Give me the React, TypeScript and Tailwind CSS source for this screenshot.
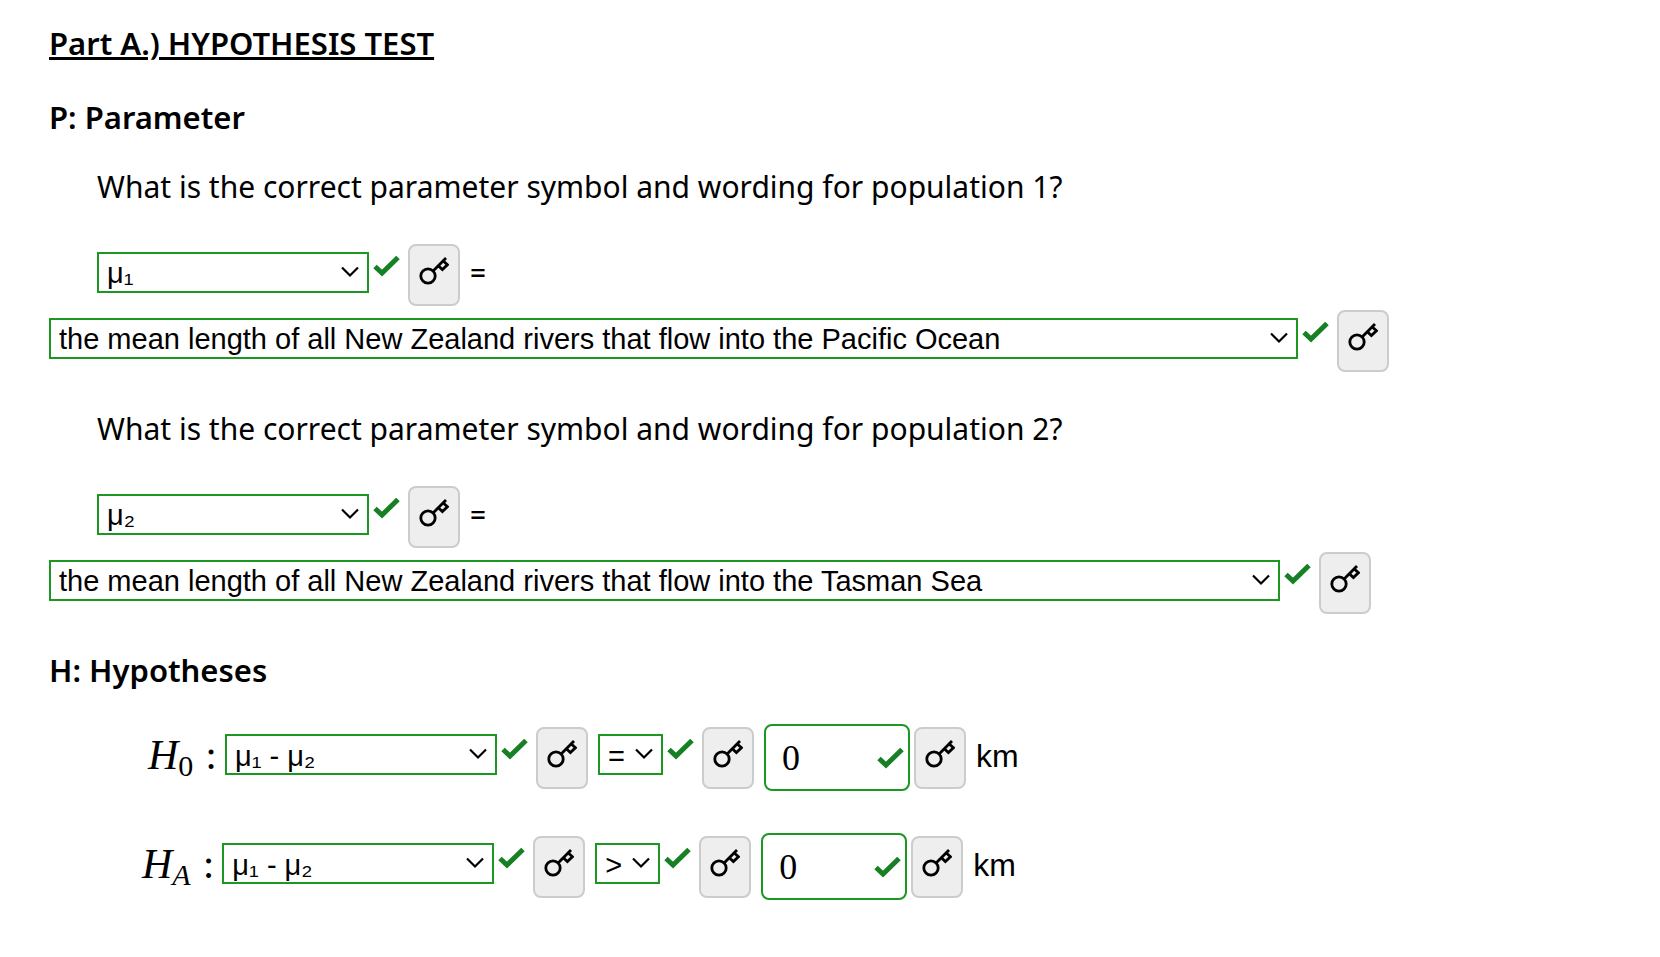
import type { ReactNode } from 'react';

const CheckIcon = ({ className = '' }: { className?: string }) => (
  <svg className={`shrink-0 ${className}`} width="27" height="22" viewBox="0 0 27 22" fill="none" aria-hidden="true">
    <path d="M2 10.5 L9 17 L25 1.5" stroke="#178024" strokeWidth="5" />
  </svg>
);

const KeyButton = () => (
  <button
    type="button"
    aria-label="Show answer"
    className="flex h-[62px] w-[52px] shrink-0 items-center justify-center rounded-lg border-2 border-[#cccccc] bg-[#eeeeee] pb-2"
  >
    <svg width="30" height="30" viewBox="0 0 30 30" fill="none" stroke="#000" strokeWidth="2.8" aria-hidden="true">
      <circle cx="9" cy="20" r="7.2" />
      <path d="M14.1 14.9 L27 2" />
      <path d="M19.3 9.7 L23.4 13.6 L28.4 8.8 L24 4.8" />
    </svg>
  </button>
);

interface SelectProps {
  label: string;
  value: string;
  className?: string;
}

const Select = ({ label, value, className = '' }: SelectProps) => (
  <div className={`relative mb-1.5 ${className}`}>
    <select
      aria-label={label}
      defaultValue={value}
      className="block h-[41px] w-full appearance-none border-2 border-[#1b9722] bg-white pt-0.5 pl-2 font-['Liberation_Sans',sans-serif] text-[29px] leading-8 text-black"
    >
      <option>{value}</option>
    </select>
    <svg
      className="pointer-events-none absolute top-[14px] right-2.5"
      width="18"
      height="12"
      viewBox="0 0 18 12"
      fill="none"
      aria-hidden="true"
    >
      <path d="M1 1.5 L9 9.5 L17 1.5" stroke="#000" strokeWidth="2.2" />
    </svg>
  </div>
);

// Select plus its correct mark and answer key
const Graded = (props: SelectProps) => (
  <>
    <Select {...props} />
    <CheckIcon className="mb-4 ml-1 mr-2" />
    <KeyButton />
  </>
);

interface PopulationProps {
  n: number;
  symbol: string;
  wording: string;
  wordingWidth: string;
}

const Population = ({ n, symbol, wording, wordingWidth }: PopulationProps) => (
  <div>
    <p className="pl-12 text-[30px] leading-[38px]">
      What is the correct parameter symbol and wording for population {n}?
    </p>
    <div className="mt-[38px] flex items-center pl-12">
      <Graded label={`Symbol ${n}`} value={symbol} className="w-[272px]" />
      <span className="mb-1.5 ml-2.5 font-medium">=</span>
    </div>
    <div className="mt-1 flex items-center">
      <Graded label={`Wording ${n}`} value={wording} className={wordingWidth} />
    </div>
  </div>
);

interface HypothesisProps {
  name: ReactNode;
  operator: string;
  className: string;
}

const Hypothesis = ({ name, operator, className }: HypothesisProps) => (
  <div className={`flex h-[67px] items-center ${className}`}>
    <div className="mr-2 mb-1.5 flex gap-3 font-['Liberation_Serif',serif] text-[42px] leading-10">
      <span>{name}</span>
      <span>:</span>
    </div>
    <Graded label="Difference" value="μ₁ - μ₂" className="w-[272px]" />
    <Graded label="Operator" value={operator} className="ml-2.5 w-[65px]" />
    <div className="relative ml-2.5 mr-1">
      <input
        aria-label="Value"
        defaultValue="0"
        className="block h-[67px] w-[146px] rounded-lg border-2 border-[#1b9722] bg-white pl-4 font-['Liberation_Serif',serif] text-[36px]"
      />
      <CheckIcon className="absolute top-6 right-1.5" />
    </div>
    <KeyButton />
    <span className="mb-1 ml-2.5 font-['Liberation_Sans',sans-serif] text-[32px]">km</span>
  </div>
);

const App = () => (
  <main className="min-h-screen bg-white px-[49px] pt-[23px] pb-6 font-['Noto_Sans',sans-serif] text-[28px] text-black">
    <h1 className="text-[31px] leading-10 font-semibold underline decoration-3">Part A.) HYPOTHESIS TEST</h1>
    <h2 className="mt-9 text-[31px] leading-9 font-semibold">P: Parameter</h2>
    <div className="mt-[33px] flex flex-col gap-[38px]">
      <Population
        n={1}
        symbol="μ₁"
        wording="the mean length of all New Zealand rivers that flow into the Pacific Ocean"
        wordingWidth="w-[1249px]"
      />
      <Population
        n={2}
        symbol="μ₂"
        wording="the mean length of all New Zealand rivers that flow into the Tasman Sea"
        wordingWidth="w-[1231px]"
      />
    </div>
    <h2 className="mt-[38px] text-[31px] leading-9 font-semibold">H: Hypotheses</h2>
    <div className="mt-9 flex flex-col gap-[42px]">
      <Hypothesis name={<><i>H</i><sub className="text-[30px]">0</sub></>} operator="=" className="pl-[99px]" />
      <Hypothesis name={<><i>H</i><sub className="text-[30px] italic">A</sub></>} operator=">" className="pl-[93px]" />
    </div>
  </main>
);

export default App;
